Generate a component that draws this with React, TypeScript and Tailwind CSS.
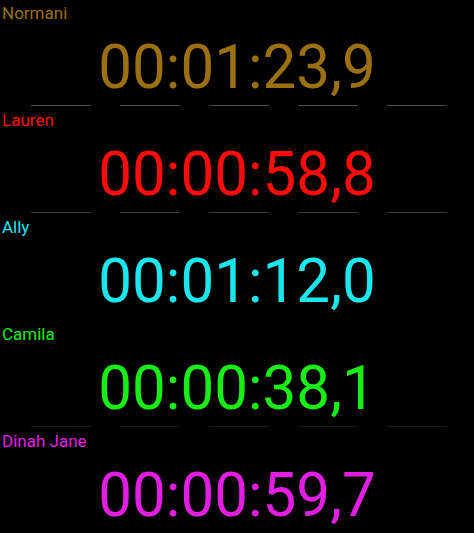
import React from 'react';

type Lap = {
  name: string;
  time: string;
  color: string;
  trail?: string;
};

const laps: Lap[] = [
  { name: 'Normani', time: '00:01:23,9', color: 'text-[#9c7012]', trail: 'bg-[#4a4a4a]' },
  { name: 'Lauren', time: '00:00:58,8', color: 'text-[#ff0b0b]', trail: 'bg-[#3a3a3a]' },
  { name: 'Ally', time: '00:01:12,0', color: 'text-[#1ae6ee]' },
  { name: 'Camila', time: '00:00:38,1', color: 'text-[#16ee16]', trail: 'bg-[#1a1a1a]' },
  { name: 'Dinah Jane', time: '00:00:59,7', color: 'text-[#e31ee3]' },
];

const TrailLines = ({ tone }: { tone: string }) => (
  <div className="flex gap-[29px] pl-[31px] mt-[7px]">
    {[0, 1, 2, 3, 4].map((i) => (
      <div key={i} className={`h-px w-[60px] ${tone}`} />
    ))}
  </div>
);

const LapRow = ({ lap }: { lap: Lap }) => (
  <div className="flex flex-col h-[107px]">
    <div className={`pt-[3px] pl-[2px] text-[17px] leading-[20px] ${lap.color}`}>{lap.name}</div>
    <div className={`mt-[13px] text-center text-[62px] leading-[62px] scale-x-[0.97] ${lap.color}`}>
      {lap.time}
    </div>
    {lap.trail && <TrailLines tone={lap.trail} />}
  </div>
);

export default function App() {
  return (
    <div className="w-[474px] h-[533px] overflow-hidden bg-black font-['Roboto',_sans-serif]">
      {laps.map((lap) => (
        <LapRow key={lap.name} lap={lap} />
      ))}
    </div>
  );
}
